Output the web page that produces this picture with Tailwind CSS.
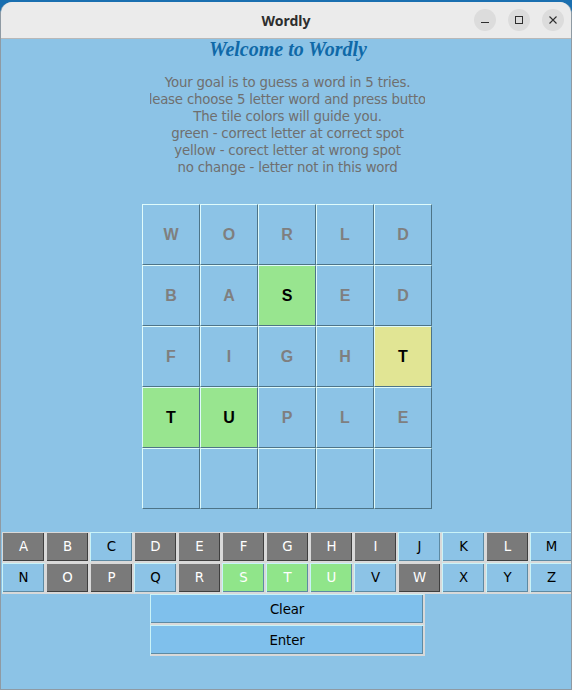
<!DOCTYPE html>
<html lang="en">
  <head>
    <meta charset="UTF-8" />
    <script src="https://cdn.jsdelivr.net/npm/@tailwindcss/browser@4"></script>
    <title>Wordly</title>
  </head>
  <body class="bg-[#1a6fb0] overflow-hidden">
    <div class="w-[572px] h-[690px] pt-[2px]">
      <div class="h-[688px] flex flex-col rounded-t-[12px] overflow-hidden bg-[#8cc3e6] border-x border-b border-[#8f9aa3]">
        <!-- title bar -->
        <header class="relative h-[37px] shrink-0 flex items-center justify-center bg-[#ebebeb] border-b border-[#b8b8b8]">
          <span class="text-[14px] font-bold text-[#2e2e2e] font-['Noto_Sans',sans-serif]">Wordly</span>
          <div class="absolute right-[7px] top-[7px] flex gap-[12px]">
            <button class="w-[22px] h-[22px] rounded-full bg-[#dcdcdc] flex items-center justify-center">
              <svg width="10" height="10" viewBox="0 0 10 10"><path d="M1 7.5h8" stroke="#2e2e2e" stroke-width="1"/></svg>
            </button>
            <button class="w-[22px] h-[22px] rounded-full bg-[#dcdcdc] flex items-center justify-center">
              <svg width="10" height="10" viewBox="0 0 10 10"><rect x="1.5" y="1.5" width="7" height="7" fill="none" stroke="#2e2e2e" stroke-width="1"/></svg>
            </button>
            <button class="w-[22px] h-[22px] rounded-full bg-[#dcdcdc] flex items-center justify-center">
              <svg width="10" height="10" viewBox="0 0 10 10"><path d="M1.5 1.5l7 7M8.5 1.5l-7 7" stroke="#2e2e2e" stroke-width="1.1"/></svg>
            </button>
          </div>
        </header>

        <!-- heading and rules -->
        <h1 class="h-[21px] pl-[4px] leading-[21px] text-center text-[20px] font-bold italic text-[#0f69a8] font-['Liberation_Serif',serif]">Welcome to Wordly</h1>
        <div class="mt-[15px] ml-[149px] w-[275px] text-[13.33px] tracking-[-0.2px] leading-[16.9px] text-[#6f6f6f] font-['DejaVu_Sans',sans-serif]">
          <p class="flex justify-center whitespace-nowrap overflow-hidden">Your goal is to guess a word in 5 tries.</p>
          <p class="flex justify-center whitespace-nowrap overflow-hidden">Please choose 5 letter word and press button</p>
          <p class="flex justify-center whitespace-nowrap overflow-hidden">The tile colors will guide you.</p>
          <p class="flex justify-center whitespace-nowrap overflow-hidden">green - correct letter at correct spot</p>
          <p class="flex justify-center whitespace-nowrap overflow-hidden">yellow - corect letter at wrong spot</p>
          <p class="flex justify-center whitespace-nowrap overflow-hidden">no change - letter not in this word</p>
        </div>

        <!-- board -->
        <div id="board" class="mt-[28px] ml-[141px] w-[290px] grid grid-cols-[repeat(5,58px)] auto-rows-[61px]"></div>

        <!-- keyboard -->
        <div id="keys" class="mt-[23px] ml-[1px] w-[572px] grid grid-cols-[repeat(13,44px)] auto-rows-[31px]"></div>
        <div class="ml-[149px] w-[275px] flex flex-col text-[13.33px] tracking-[-0.15px] text-black font-['DejaVu_Sans',sans-serif]">
          <button class="h-[31px] pt-[1px] bg-[#7fc0ec] border border-b-2 border-r-2 border-[#d9d9d9] border-t-[#c9f3f8] border-l-[#c9f3f8] shadow-[inset_-1px_-1px_0_#5d8aa3]">Clear</button>
          <button class="h-[31px] pt-[1px] bg-[#7fc0ec] border border-b-2 border-r-2 border-[#d9d9d9] border-t-[#c9f3f8] border-l-[#c9f3f8] shadow-[inset_-1px_-1px_0_#5d8aa3]">Enter</button>
        </div>
      </div>
    </div>
    <script>
      const rows = ["WORLD", "BASED", "FIGHT", "TUPLE", "     "];
      const marks = { "1,2": "g", "2,4": "y", "3,0": "g", "3,1": "g" };
      let boardHtml = "";
      rows.forEach((word, r) => {
        [...word].forEach((ch, c) => {
          const m = marks[r + "," + c];
          let tone = "bg-[#8cc3e6] text-[#7f7f7f]";
          if (m === "g") tone = "bg-[#98e58f] text-black";
          if (m === "y") tone = "bg-[#e1e594] text-black";
          boardHtml += `<div class="flex items-center justify-center text-[16px] font-bold font-['Liberation_Sans',sans-serif] border border-t-[#dffbfb] border-l-[#dffbfb] border-r-[#4d7488] border-b-[#4d7488] ${tone}">${ch.trim()}</div>`;
        });
      });
      document.getElementById("board").innerHTML = boardHtml;

      const used = "ABDEFGHILOPRW";
      const right = "STU";
      let keysHtml = "";
      "ABCDEFGHIJKLMNOPQRSTUVWXYZ".split("").forEach((ch) => {
        let tone = "bg-[#8cc3e6] text-black border-t-[#c9f3f8] border-l-[#c9f3f8] shadow-[inset_-1px_-1px_0_#5d8aa3]";
        if (used.includes(ch)) tone = "bg-[#7a7a7a] text-white shadow-[inset_-1px_-1px_0_#3f3f3f]";
        if (right.includes(ch)) tone = "bg-[#90e58a] text-white border-t-[#c9f3f8] border-l-[#c9f3f8] shadow-[inset_-1px_-1px_0_#5d8aa3]";
        keysHtml += `<button class="text-[13.33px] font-['DejaVu_Sans',sans-serif] border border-b-2 border-r-2 border-[#d9d9d9] ${tone}">${ch}</button>`;
      });
      document.getElementById("keys").innerHTML = keysHtml;
    </script>
  </body>
</html>
